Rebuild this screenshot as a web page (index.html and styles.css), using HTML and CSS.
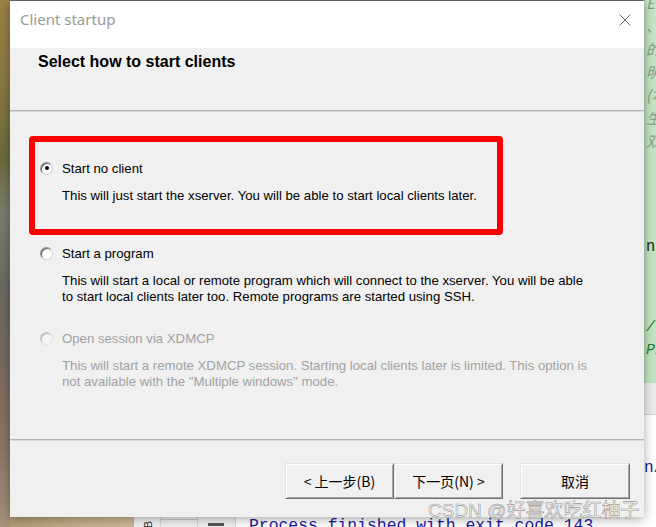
FILE: index.html
```html
<!DOCTYPE html>
<html lang="en">
<head>
    <meta charset="UTF-8">
    <meta name="viewport" content="width=device-width, initial-scale=1.0">
    <title>Client startup</title>
    <link rel="stylesheet" href="styles.css">
</head>
<body>
    <div class="desktop">

        <div class="photo"></div>
        <div class="topline"></div>

        <div class="editor">
            <div class="editor-green">
                <span class="first">EIL</span><span>、</span><span>的压</span><span>明锌</span><span>(本</span><span>生一</span><span>双结</span>
                <span class="dark">np</span>
                <span class="code gap">/:</span><span class="code">P/</span>
            </div>
            <div class="editor-gray"></div>
            <div class="editor-white"><span>n/</span></div>
        </div>

        <div class="dialog">
            <div class="titlebar">
                <span class="title">Client startup</span>
                <svg class="close" width="12" height="12" viewBox="0 0 12 12">
                    <path d="M0.5 0.5 L11.5 11.5 M11.5 0.5 L0.5 11.5" stroke="#666" stroke-width="1" fill="none"/>
                </svg>
            </div>

            <div class="header">
                <h1>Select how to start clients</h1>
            </div>
            <div class="sep"></div>

            <div class="options">
                <div class="option">
                    <label class="opt-title"><span class="radio checked"></span>Start no client</label>
                    <p>This will just start the xserver. You will be able to start local clients later.</p>
                </div>
                <div class="option">
                    <label class="opt-title"><span class="radio"></span>Start a program</label>
                    <p>This will start a local or remote program which will connect to the xserver. You will be able<br>to start local clients later too. Remote programs are started using SSH.</p>
                </div>
                <div class="option disabled">
                    <label class="opt-title"><span class="radio"></span>Open session via XDMCP</label>
                    <p>This will start a remote XDMCP session. Starting local clients later is limited. This option is<br>not available with the "Multiple windows" mode.</p>
                </div>

                <div class="mark"></div>
            </div>

            <div class="sep"></div>
            <div class="footer">
                <button class="btn">&lt; 上一步(B)</button>
                <button class="btn">下一页(N) &gt;</button>
                <button class="btn cancel">取消</button>
            </div>
        </div>

        <div class="ide">
            <div class="ide-photo"></div>
            <div class="ide-tab"><span>B</span></div>
            <div class="ide-tool line"></div>
            <div class="ide-tool dash"></div>
            <div class="ide-console">Process finished with exit code 143</div>
        </div>

        <div class="watermark">CSDN @好喜欢吃红柚子</div>
    </div>
</body>
</html>
```

FILE: styles.css
```css
body {
    margin: 0;
    background-color: #7a7060;
}
.desktop {
    position: relative;
    width: 656px;
    height: 527px;
    overflow: hidden;
    display: grid;
    grid-template-columns: 10px 634px 12px;
    grid-template-rows: 1px 516px 10px;
}

/* background bits around the dialog */
.photo {
    grid-row: 1 / 4;
    grid-column: 1;
    background: linear-gradient(to bottom, #9c8244 0%, #8c7a42 14%, #6e6a3e 30%, #7a7e6c 40%, #6c6a60 55%, #7a6a5e 70%, #8a7666 85%, #a8927c 100%);
}
.topline {
    grid-row: 1;
    grid-column: 2;
    background-color: #6a6a6a;
}
.editor {
    grid-row: 1 / 4;
    grid-column: 3;
    display: flex;
    flex-direction: column;
    overflow: hidden;
}
.editor-green {
    height: 383px;
    background-color: #c3e5c4;
    border-left: 2px solid #b4dab6;
    display: flex;
    flex-direction: column;
    font-family: "Noto Sans CJK SC", serif;
    font-style: italic;
    font-size: 15px;
    line-height: 23px;
    color: #8c9a8c;
    white-space: nowrap;
}
.editor-green .first {
    margin-top: -9px;
}
.editor-green .dark {
    margin-top: 81px;
    color: #222;
    font-style: normal;
}
.editor-green .code {
    color: #2a7a2a;
    font-family: "Liberation Mono", monospace;
}
.editor-green .gap {
    margin-top: 60px;
}
.editor-gray {
    height: 31px;
    background-color: #ececec;
    border-bottom: 1px solid #d4d4d4;
}
.editor-white {
    flex: 1;
    background-color: #fff;
    padding-top: 44px;
    font-family: "Liberation Mono", monospace;
    font-size: 16px;
    color: #1a1aa0;
}

/* dialog */
.dialog {
    grid-row: 2;
    grid-column: 2;
    z-index: 1;
    display: flex;
    flex-direction: column;
    background-color: #f0f0f0;
    box-shadow: 0 2px 10px rgba(0, 0, 0, 0.35);
    font-family: "Liberation Sans", Arial, sans-serif;
}
.titlebar {
    height: 47px;
    flex-shrink: 0;
    display: flex;
    align-items: flex-start;
    padding: 0 13px 0 10px;
    background-color: #fff;
}
.title {
    margin-top: 8px;
    font-family: "Noto Sans", "Open Sans", sans-serif;
    font-size: 15px;
    line-height: 20px;
    color: #999;
}
.close {
    margin-left: auto;
    margin-top: 13px;
}
.header {
    height: 56px;
    padding: 6px 0 0 28px;
}
h1 {
    margin: 0;
    font-size: 16px;
    line-height: 16px;
    font-weight: bold;
    color: #000;
}
.sep {
    height: 0;
    border-top: 1px solid #b4b4b4;
    border-bottom: 1px solid #d8d8d8;
}

.options {
    position: relative;
    flex: 1;
    padding: 48px 0 0 30px;
}
.option {
    height: 85px;
}
.opt-title {
    display: flex;
    align-items: center;
    gap: 9px;
    height: 16px;
    font-size: 13.2px;
    color: #000;
}
.option p {
    margin: 12px 0 0 22px;
    font-size: 13.2px;
    line-height: 16px;
    color: #000;
    white-space: nowrap;
}
.disabled .opt-title,
.disabled p {
    color: #a2a2a2;
}
.radio {
    width: 11px;
    height: 11px;
    border-radius: 50%;
    border: 1px solid #8e8e8e;
    border-right-color: #d4d4d4;
    border-bottom-color: #d4d4d4;
    background-color: #fff;
    box-shadow: inset 1px 1px 0 #5e5e5e;
    display: flex;
    align-items: center;
    justify-content: center;
}
.radio.checked::after {
    content: "";
    width: 4px;
    height: 4px;
    border-radius: 50%;
    background-color: #000;
}
.disabled .radio {
    border-color: #c4c4c4;
    border-right-color: #e2e2e2;
    border-bottom-color: #e2e2e2;
    box-shadow: inset 1px 1px 0 #bdbdbd;
    background-color: #f4f4f4;
}

/* the red annotation frame */
.mark {
    position: absolute;
    left: 19px;
    top: 24px;
    width: 462px;
    height: 87px;
    border: 6px solid #ff0000;
    border-radius: 4px;
}

.footer {
    height: 54px;
    display: flex;
    justify-content: flex-end;
    padding: 22px 14px 0 0;
}
.btn {
    width: 109px;
    height: 36px;
    padding: 0;
    background-color: #f0f0f0;
    border: 1px solid;
    border-color: #e4e4e4 #6e6e6e #6e6e6e #e4e4e4;
    box-shadow: inset 1px 1px 0 #fff, inset -1px -1px 0 #a8a8a8;
    font-family: "Noto Sans CJK SC", sans-serif;
    font-size: 14px;
    color: #000;
}
.cancel {
    width: 110px;
    margin-left: 17px;
}

/* bottom of the IDE behind */
.ide {
    grid-row: 3;
    grid-column: 2;
    display: flex;
    background-color: #fff;
}
.ide-photo {
    width: 124px;
    background: linear-gradient(to right, #b49a76, #c8b092 60%, #cdb79a);
}
.ide-tab {
    width: 26px;
    background-color: #f2f2f2;
    border-right: 1px solid #d6d6d6;
    display: flex;
    justify-content: center;
    font-family: "Liberation Sans", sans-serif;
    font-size: 11px;
    color: #333;
}
.ide-tab span {
    display: block;
    transform: rotate(-90deg);
    margin-top: 3px;
    height: 9px;
}
.ide-tool {
    background-color: #f2f2f2;
    border-right: 1px solid #d6d6d6;
}
.ide-tool.line {
    width: 36px;
    background: linear-gradient(#f2f2f2 2px, #d0d0d0 2px, #d0d0d0 3px, #f2f2f2 3px);
}
.ide-tool.dash {
    width: 37px;
    background: linear-gradient(to right, transparent 10px, #555 10px, #555 26px, transparent 26px) no-repeat 0 6px / 100% 3px, #f2f2f2;
}
.ide-console {
    padding-left: 13px;
    font-family: "Liberation Mono", monospace;
    font-size: 16.4px;
    line-height: 20px;
    margin-top: -1px;
    white-space: nowrap;
    color: #1a1aa0;
}

.watermark {
    position: absolute;
    left: 428px;
    top: 495px;
    z-index: 2;
    font-family: "Liberation Sans", "Noto Sans CJK SC", sans-serif;
    font-size: 19px;
    color: rgba(250, 250, 250, 0.85);
    -webkit-text-stroke: 0.6px rgba(110, 110, 110, 0.7);
    white-space: nowrap;
}
```
